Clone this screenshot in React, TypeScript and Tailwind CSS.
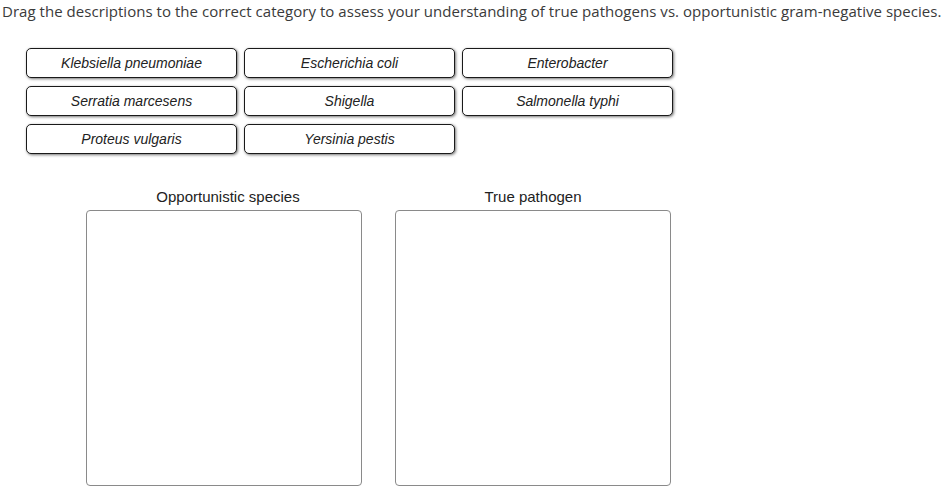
const items = [
  'Klebsiella pneumoniae',
  'Escherichia coli',
  'Enterobacter',
  'Serratia marcesens',
  'Shigella',
  'Salmonella typhi',
  'Proteus vulgaris',
  'Yersinia pestis',
];

const categories = [
  { title: 'Opportunistic species', labelClass: 'pl-[8px]' },
  { title: 'True pathogen', labelClass: '' },
];

export default function App() {
  return (
    <main className="min-h-screen bg-white text-[#333]">
      <p
        className="pl-[2px] pt-[1px] text-[15px] leading-[20px] tracking-[0.04px] text-[#3a3a3a]"
        style={{ fontFamily: '"Open Sans", sans-serif' }}
      >
        Drag the descriptions to the correct category to assess your understanding of true pathogens vs. opportunistic gram-negative species.
      </p>

      <div className="ml-[26px] mt-[27px] grid w-fit grid-cols-[211px_211px_211px] gap-x-[7px] gap-y-[8px]">
        {items.map((name) => (
          <div
            key={name}
            className="flex h-[30px] items-center justify-center rounded-[5px] border border-[#1a1a1a] bg-white text-[14px] italic text-[#222] shadow-[1px_1px_3px_rgba(0,0,0,0.55)]"
            style={{ fontFamily: '"Liberation Sans", Arial, sans-serif' }}
          >
            {name}
          </div>
        ))}
      </div>

      <div className="ml-[86px] mt-[33px] flex gap-[33px]" style={{ fontFamily: '"Liberation Sans", Arial, sans-serif' }}>
        {categories.map(({ title, labelClass }) => (
          <section key={title} className="flex w-[276px] flex-col items-center">
            <h2 className={`h-[23px] text-[15px] leading-[19px] text-[#222] ${labelClass}`}>{title}</h2>
            <div className="h-[276px] w-full rounded-[4px] border border-[#8a8a8a] bg-white" />
          </section>
        ))}
      </div>
    </main>
  );
}
